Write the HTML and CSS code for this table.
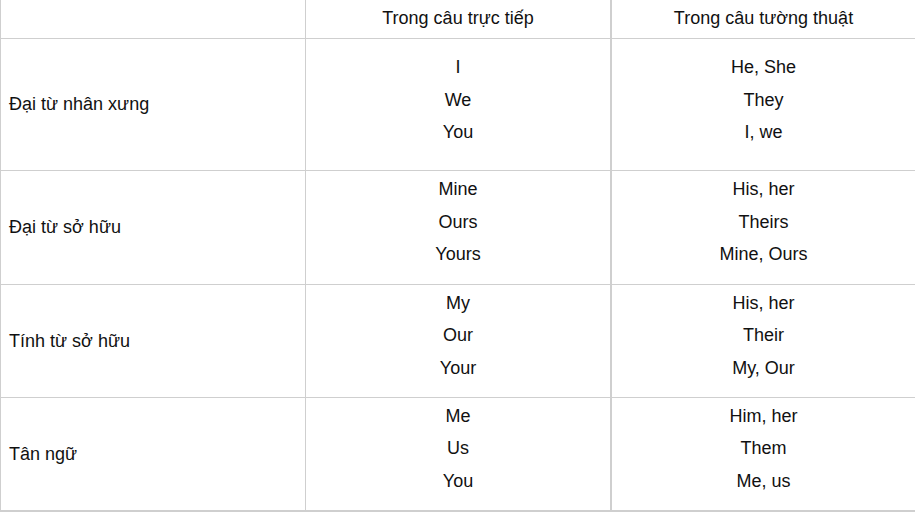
FILE: index.html
```html
<!DOCTYPE html>
<html lang="vi">
<head>
<meta charset="utf-8">
<link rel="stylesheet" href="styles.css">
</head>
<body>
<table class="grammar">
  <colgroup>
    <col class="c1"><col class="c2"><col class="c3">
  </colgroup>
  <thead>
    <tr class="head">
      <th></th>
      <th>Trong câu trực tiếp</th>
      <th>Trong câu tường thuật</th>
    </tr>
  </thead>
  <tbody>
    <tr class="r1">
      <td class="label">Đại từ nhân xưng</td>
      <td class="mid"><div class="stack"><div>I</div><div>We</div><div>You</div></div></td>
      <td class="last"><div class="stack"><div>He, She</div><div>They</div><div>I, we</div></div></td>
    </tr>
    <tr class="r2">
      <td class="label">Đại từ sở hữu</td>
      <td class="mid"><div class="stack"><div>Mine</div><div>Ours</div><div>Yours</div></div></td>
      <td class="last"><div class="stack"><div>His, her</div><div>Theirs</div><div>Mine, Ours</div></div></td>
    </tr>
    <tr class="r3">
      <td class="label">Tính từ sở hữu</td>
      <td class="mid"><div class="stack"><div>My</div><div>Our</div><div>Your</div></div></td>
      <td class="last"><div class="stack"><div>His, her</div><div>Their</div><div>My, Our</div></div></td>
    </tr>
    <tr class="r4">
      <td class="label">Tân ngữ</td>
      <td class="mid"><div class="stack"><div>Me</div><div>Us</div><div>You</div></div></td>
      <td class="last"><div class="stack"><div>Him, her</div><div>Them</div><div>Me, us</div></div></td>
    </tr>
  </tbody>
</table>
</body>
</html>
```

FILE: styles.css
```css
html, body {
  margin: 0;
  padding: 0;
  background: #fff;
}
body {
  font-family: "Liberation Sans", Arial, sans-serif;
  font-size: 18px;
  color: #111;
  overflow: hidden;
}
.grammar {
  border-collapse: separate;
  border-spacing: 0;
  table-layout: fixed;
  width: 915px;
  border-left: 1px solid #cfcfcf;
}
.c1 { width: 305px; }
.c2 { width: 306px; }
.c3 { width: 303px; }
.grammar th,
.grammar td {
  box-sizing: border-box;
  padding: 0;
  border-right: 1px solid #cfcfcf;
  border-bottom: 1px solid #cfcfcf;
  vertical-align: middle;
  text-align: center;
  font-weight: normal;
  line-height: 32.4px;
}
.grammar th:nth-child(2),
.grammar td.mid {
  border-right-width: 2px;
}
.grammar td.last,
.grammar th:last-child {
  border-right: none;
}
.head { height: 39px; }
.head th { padding-bottom: 2px; }
.r1 { height: 132px; }
.r2 { height: 114px; }
.r3 { height: 113px; }
.r4 { height: 114px; }
.r4 td { border-bottom-width: 2px; }
.r1 .stack { padding-top: 2px; }
.grammar td.label {
  text-align: left;
  padding-left: 8px;
}
.stack {
  padding-bottom: 11px;
}
```
